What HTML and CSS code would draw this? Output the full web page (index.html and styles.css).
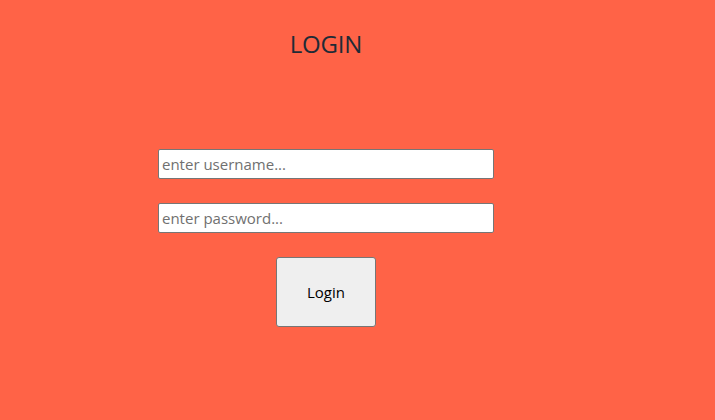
FILE: index.html
```html
<!DOCTYPE html>
<html>
<head>
<meta charset="utf-8">
<link rel="stylesheet" href="styles.css">
</head>
<body>
<div class="page">
  <h1 class="title">LOGIN</h1>
  <form class="form">
    <input class="field" type="text" placeholder="enter username...">
    <input class="field" type="password" placeholder="enter password...">
    <button class="btn" type="button">Login</button>
  </form>
</div>
</body>
</html>
```
FILE: styles.css
```css
html, body {
  margin: 0;
  padding: 0;
  background: #ff6347;
  height: 100%;
}
body {
  font-family: "Open Sans", "Noto Sans", sans-serif;
  color: #1f2b36;
}
.page {
  width: 652px;
  display: flex;
  flex-direction: column;
  align-items: center;
}
.title {
  margin: 28px 0 0 0;
  font-size: 24px;
  font-weight: 400;
  line-height: 32px;
  letter-spacing: -0.2px;
}
.form {
  margin-top: 89px;
  display: flex;
  flex-direction: column;
  align-items: center;
  gap: 24px;
}
.field {
  box-sizing: border-box;
  width: 336px;
  height: 30px;
  margin: 0;
  padding: 0 3px;
  border: 1px solid #767676;
  border-radius: 2px;
  background: #fff;
  font-family: "Open Sans", "Noto Sans", sans-serif;
  font-size: 15px;
  color: #000;
}
.field::placeholder {
  color: #707070;
}
.btn {
  box-sizing: border-box;
  width: 100px;
  height: 70px;
  margin: 0;
  border: 1px solid #767676;
  border-radius: 3px;
  background: #efefef;
  font-family: "Open Sans", "Noto Sans", sans-serif;
  font-size: 15px;
  color: #000;
}
```
